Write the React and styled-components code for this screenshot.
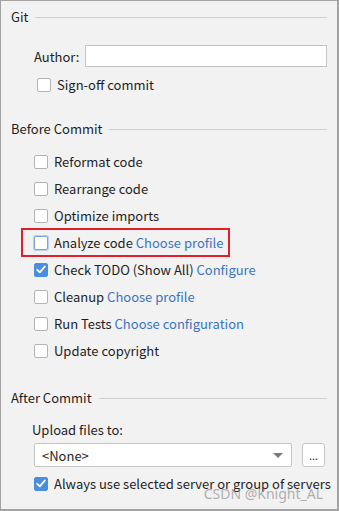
import React from "react";
import styled, { createGlobalStyle } from "styled-components";

const Global = createGlobalStyle`
	html, body {
		margin: 0;
		padding: 0;
		background: #f2f2f2;
	}
	body {
		font-family: "Noto Sans CJK SC", "Noto Sans", sans-serif;
		font-size: 13px;
		color: #1e1e1e;
	}
`;

const Window = styled("div")`
	position: relative;
	box-sizing: border-box;
	width: 339px;
	height: 511px;
	border: 1px solid #a3a3a3;
	border-right-width: 2px;
	border-bottom-width: 2px;
	background: #f2f2f2;
	padding: 5px 10px 0 10px;
	overflow: hidden;
`;

const Section = styled("section")`
	display: flex;
	flex-direction: column;
`;

const Header = styled("div")`
	display: flex;
	align-items: center;
	gap: 7px;
	height: 22px;
	line-height: 22px;

	&::after {
		content: "";
		flex: 1;
		height: 1px;
		background: #cfcfcf;
	}
`;

const Body = styled("div")`
	display: flex;
	flex-direction: column;
	padding-left: ${(p) => p.$indent || 23}px;
	margin-top: ${(p) => p.$top || 0}px;
	margin-bottom: ${(p) => p.$bottom || 0}px;
`;

const FieldRow = styled("label")`
	display: flex;
	align-items: center;
	gap: 6px;
	height: 24px;
`;

const TextInput = styled("div")`
	flex: 1;
	height: 22px;
	box-sizing: border-box;
	background: #fff;
	border: 1px solid #c4c4c4;
`;

const CheckRow = styled("div")`
	position: relative;
	display: flex;
	align-items: center;
	gap: 6px;
	height: 27px;
	margin-left: ${(p) => p.$shift || 0}px;
	margin-top: ${(p) => p.$top || 0}px;
	white-space: nowrap;
`;

const Box = styled("span")`
	box-sizing: border-box;
	width: 14px;
	height: 14px;
	border-radius: 2px;
	flex: none;
	display: flex;
	align-items: center;
	justify-content: center;
	background: ${(p) => (p.$checked ? "#4a8fde" : "#fff")};
	border: 1px solid ${(p) => (p.$checked ? "#4a8fde" : p.$focus ? "#7aa4e0" : "#b3b3b3")};
	box-shadow: ${(p) => (p.$focus ? "0 0 0 1px #b7cff0" : "none")};
`;

const Link = styled("span")`
	color: #3a74c2;
`;

const Highlight = styled("span")`
	position: absolute;
	left: -13px;
	top: -1px;
	width: 209px;
	height: 29px;
	box-sizing: border-box;
	border: 2px solid #e0202a;
	pointer-events: none;
`;

const SelectRow = styled("div")`
	display: flex;
	align-items: center;
	gap: 10px;
	margin-top: 4px;
`;

const Select = styled("div")`
	box-sizing: border-box;
	width: 258px;
	height: 24px;
	background: #fff;
	border: 1px solid #c6c6c6;
	border-radius: 2px;
	display: flex;
	align-items: center;
	justify-content: space-between;
	padding: 0 8px 0 7px;

	&::after {
		content: "";
		border-left: 5px solid transparent;
		border-right: 5px solid transparent;
		border-top: 5px solid #7a7a7a;
	}
`;

const DotsButton = styled("div")`
	box-sizing: border-box;
	width: 23px;
	height: 24px;
	background: #fff;
	border: 1px solid #c6c6c6;
	border-radius: 3px;
	display: flex;
	align-items: flex-end;
	justify-content: center;
	padding-bottom: 5px;
	font-size: 11px;
	line-height: 1;
`;

const Watermark = styled("span")`
	position: absolute;
	right: 14px;
	bottom: 6px;
	color: rgba(150, 150, 150, 0.75);
	font-family: "Noto Sans", sans-serif;
	font-size: 14px;
	pointer-events: none;
`;

const Check = () => (
	<svg width="10" height="9" viewBox="0 0 10 9">
		<path d="M1.2 4.8 L3.8 7.3 L8.8 1.5" fill="none" stroke="#fff" strokeWidth="1.8" strokeLinecap="round" strokeLinejoin="round" />
	</svg>
);

const Option = ({ checked, focus, children, shift, top }) => (
	<CheckRow $shift={shift} $top={top}>
		<Box $checked={checked} $focus={focus}>{checked && <Check />}</Box>
		<span>{children}</span>
	</CheckRow>
);

const App = () => (
	<>
		<Global />
		<Window>
			<Section>
				<Header>Git</Header>
				<Body $top={16} $bottom={20}>
					<FieldRow>
						<span>Author:</span>
						<TextInput />
					</FieldRow>
					<Option shift={3} top={3}>Sign-off commit</Option>
				</Body>
			</Section>

			<Section>
				<Header>Before Commit</Header>
				<Body $top={8} $bottom={23}>
					<Option>Reformat code</Option>
					<Option>Rearrange code</Option>
					<Option>Optimize imports</Option>
					<CheckRow>
						<Highlight />
						<Box $focus />
						<span>Analyze code <Link>Choose profile</Link></span>
					</CheckRow>
					<Option checked>
						Check TODO (Show All) <Link>Configure</Link>
					</Option>
					<Option>
						Cleanup <Link>Choose profile</Link>
					</Option>
					<Option>
						Run Tests <Link>Choose configuration</Link>
					</Option>
					<Option>Update copyright</Option>
				</Body>
			</Section>

			<Section>
				<Header>After Commit</Header>
				<Body $top={11} $indent={21}>
					<span>Upload files to:</span>
				</Body>
				<Body $indent={23}>
					<SelectRow>
						<Select>&lt;None&gt;</Select>
						<DotsButton>...</DotsButton>
					</SelectRow>
					<Option checked top={3}>Always use selected server or group of servers</Option>
				</Body>
			</Section>
			<Watermark>CSDN @Knight_AL</Watermark>
		</Window>
	</>
);

export default App;
